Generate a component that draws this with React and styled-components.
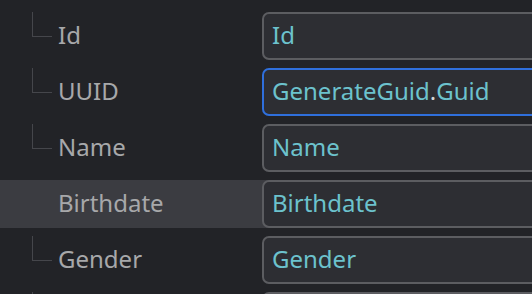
import React from "react";
import styled, { createGlobalStyle } from "styled-components";

const Global = createGlobalStyle`
  html, body { margin: 0; padding: 0; background: #222327; overflow: hidden; }
  body { font-family: "Noto Sans", "Open Sans", sans-serif; }
`;

const Panel = styled.div`
  display: flex;
  flex-direction: column;
  gap: 8px;
  padding-top: 12px;
  width: 620px;
  height: 294px;
  box-sizing: border-box;
  overflow: hidden;
`;

const Row = styled.div`
  display: flex;
  align-items: stretch;
  flex: 0 0 48px;
  height: 48px;
  background: ${(p) => (p.$hover ? "#3b3c41" : "transparent")};
`;

const LabelCell = styled.div`
  position: relative;
  width: 262px;
  flex: 0 0 262px;
  display: flex;
  align-items: center;
  padding-left: 58px;
  box-sizing: border-box;
  color: #a7a8aa;
  font-size: 24px;
  line-height: 1;
  padding-bottom: 3px;
`;

const TreeLine = styled.span`
  position: absolute;
  left: 32px;
  top: 0;
  width: 20px;
  height: 25px;
  border-left: 1px solid #45464b;
  border-bottom: 1px solid #45464b;
  box-sizing: border-box;
`;

const Field = styled.div`
  flex: 1;
  display: flex;
  align-items: center;
  box-sizing: border-box;
  border: 2px solid ${(p) => (p.$focus ? "#2f6fdc" : "#5c5d61")};
  border-radius: 7px;
  background: #2d2e33;
  padding: 0 0 3px 8px;
  color: #6cc2cd;
  font-size: 24px;
  line-height: 1;
`;

const Dot = styled.span`
  color: #d4d4d6;
`;

const rows = [
  { key: "id", label: "Id", value: "Id", tree: true },
  { key: "uuid", label: "UUID", value: ["GenerateGuid", "Guid"], tree: true, focus: true },
  { key: "name", label: "Name", value: "Name", tree: true },
  { key: "birth", label: "Birthdate", value: "Birthdate", hover: true },
  { key: "gender", label: "Gender", value: "Gender", tree: true },
  { key: "next", label: "", value: "", tree: true },
];

export default function App() {
  return (
    <>
      <Global />
      <Panel>
        {rows.map((r) => (
          <Row key={r.key} $hover={r.hover}>
            <LabelCell>
              {r.tree && <TreeLine />}
              {r.label}
            </LabelCell>
            <Field $focus={r.focus}>
              {Array.isArray(r.value) ? (
                <>
                  {r.value[0]}
                  <Dot>.</Dot>
                  {r.value[1]}
                </>
              ) : (
                r.value
              )}
            </Field>
          </Row>
        ))}
      </Panel>
    </>
  );
}
